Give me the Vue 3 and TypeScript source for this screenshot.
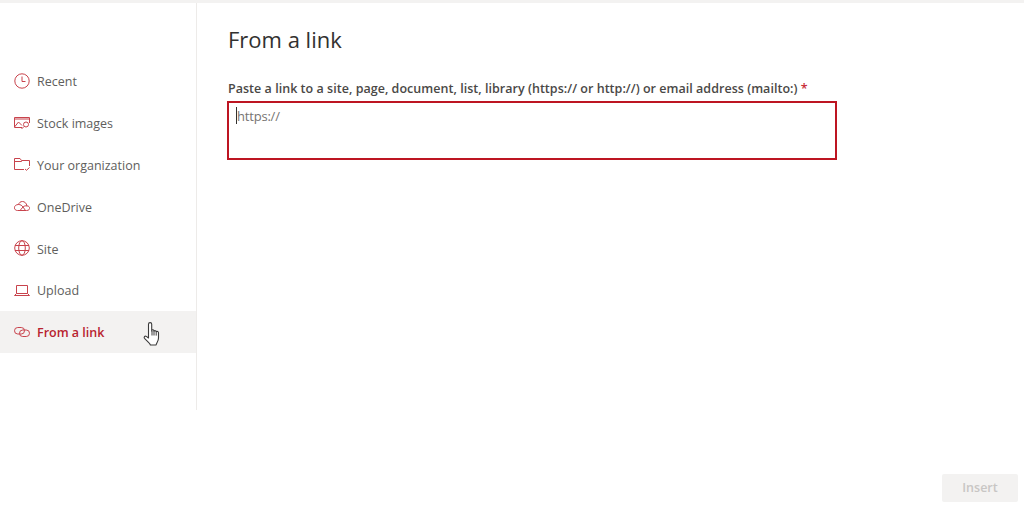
<template>
  <div class="picker">
    <div class="topline"></div>
    <div class="body">
      <nav class="side">
        <a v-for="item in items" :key="item.label" class="side-item" :class="{ 'side-item--active': item.label === active }">
          <svg class="side-icon" viewBox="0 0 16 16" fill="none" stroke="currentColor" stroke-width="1" v-html="item.icon"></svg>
          <span class="side-label">{{ item.label }}</span>
        </a>
        <svg class="cursor" viewBox="0 0 20 26" width="20" height="26">
          <path d="M6.5 14V3.2a1.6 1.6 0 0 1 3.2 0V10l.3-1.2c1.3-.3 2 .3 2 1.2.9-.7 2-.4 2.2.6.9-.5 2.3-.2 2.3 1.1V17c0 2-.6 3.2-1.4 4.5-.7 1.2-1 2.5-1 2.5H8.4s-.3-1.1-1.4-2.1L2.5 17.3c-.9-1 .3-2.8 1.8-1.9L6.5 17z" fill="#fff" stroke="#3a3a3a" stroke-width="1.1" stroke-linejoin="round"/>
          <path d="M10 10v4.500M12 10v4.500M14.200 10.600v4" stroke="#3a3a3a" stroke-width="1" fill="none"/>
        </svg>
      </nav>
      <main class="content">
        <h1 class="title">From a link</h1>
        <label class="field-label">Paste a link to a site, page, document, list, library (https:// or http://) or email address (mailto:) <span class="req">*</span></label>
        <div class="input-box">
          <i class="caret"></i><span class="placeholder">https://</span>
        </div>
      </main>
    </div>
    <div class="footer">
      <button class="insert" disabled>Insert</button>
    </div>
  </div>
</template>

<script setup lang="ts">
const active = 'From a link'

const items = [
  { label: 'Recent', icon: '<circle cx="8" cy="8" r="7.2"/><path d="M8 3.500V8.500H11.500"/>' },
  { label: 'Stock images', icon: '<path d="M8 12.500H.5V2.500H15.500V8M.5 4H15.500"/><path d="M.5 12L4.500 7 8 10.500"/><circle cx="12" cy="9.500" r="2.500"/><path d="M10 11.500L7.500 14"/>' },
  { label: 'Your organization', icon: '<path d="M10 13.500H.5V2.500H6L7.500 4.500H15.500V10M.5 5.500H7.500L9 4"/><path d="M11 13l1.500 1.300L15.500 11.500"/>' },
  { label: 'OneDrive', icon: '<path d="M3.500 12.500H12.500C15 12.500 16 11 15.500 9.500 15 8.200 14 8 13 8 12.500 5 10.500 3.500 8.500 3.500 6.500 3.500 5 4.700 4.500 6.500 2 6.500.4 8 .4 9.800.4 11.300 1.700 12.500 3.500 12.500Z"/><path d="M4.500 6.500C6.500 6.500 8 7.500 9 9L11.500 12.500M6 12.500L9 9C10 8 11.500 7.500 13 8"/>' },
  { label: 'Site', icon: '<circle cx="8" cy="8" r="7.300"/><ellipse cx="8" cy="8" rx="3.300" ry="7.300"/><path d="M1 5.500H15M1 10.500H15"/>' },
  { label: 'Upload', icon: '<path d="M2.500 11.500V3.500H13.500V11.500"/><path d="M.5 13.500H15.500M.5 13.500L2.500 11.500H13.500L15.500 13.500"/>' },
  { label: 'From a link', icon: '<rect x=".5" y="3.500" width="10" height="6.500" rx="3.250"/><rect x="5.500" y="6" width="10" height="6.500" rx="3.250"/>' },
]
</script>

<style>
html, body { margin: 0; background: #fff; }
</style>

<style scoped>
.picker {
  display: flex;
  flex-direction: column;
  width: 1024px;
  height: 507px;
  overflow: hidden;
  background: #fff;
  font-family: "Open Sans", "Noto Sans", sans-serif;
  color: #323130;
}

.topline {
  height: 3px;
  background: #f3f2f1;
}

.body {
  display: flex;
  height: 407px;
}

.side {
  position: relative;
  width: 196px;
  padding-top: 57px;
  border-right: 1px solid #edebe9;
}

.side-item {
  display: flex;
  align-items: center;
  gap: 7px;
  height: 41.8px;
  padding-left: 14px;
  font-size: 12.5px;
  color: #605e5c;
}

.side-label {
  padding-top: 2px;
}

.side-icon {
  width: 16px;
  height: 16px;
  color: #c8434c;
  flex: none;
}

.side-item--active {
  background: #f3f2f1;
  color: #b8232f;
  font-weight: 600;
}

.cursor {
  position: absolute;
  left: 142px;
  top: 318px;
}

.content {
  flex: 1;
  padding: 0 0 0 31px;
}

.title {
  margin: 20px 0 0;
  font-size: 22px;
  line-height: 32px;
  font-weight: 400;
  color: #323130;
}

.field-label {
  display: block;
  margin-top: 25px;
  font-size: 12.5px;
  line-height: 18px;
  font-weight: 600;
  color: #4a4846;
  letter-spacing: 0.03px;
  white-space: nowrap;
}

.req {
  color: #c8303a;
}

.input-box {
  display: flex;
  align-items: flex-start;
  box-sizing: border-box;
  width: 610px;
  height: 59px;
  margin-top: 3px;
  margin-left: -1px;
  padding: 4px 0 0 7px;
  border: 2px solid #bd1522;
  font-size: 13px;
  line-height: 18px;
  color: #767472;
  letter-spacing: -0.2px;
}

.caret {
  width: 1px;
  height: 17px;
  background: #323130;
}

.footer {
  flex: 1;
  display: flex;
  justify-content: flex-end;
  align-items: flex-end;
  padding: 0 6px 5px 0;
}

.insert {
  width: 76px;
  height: 28px;
  border: 0;
  border-radius: 2px;
  padding: 0 0 2px;
  background: #f3f2f1;
  color: #c8c6c4;
  font-family: inherit;
  font-size: 12.5px;
  font-weight: 600;
}
</style>
